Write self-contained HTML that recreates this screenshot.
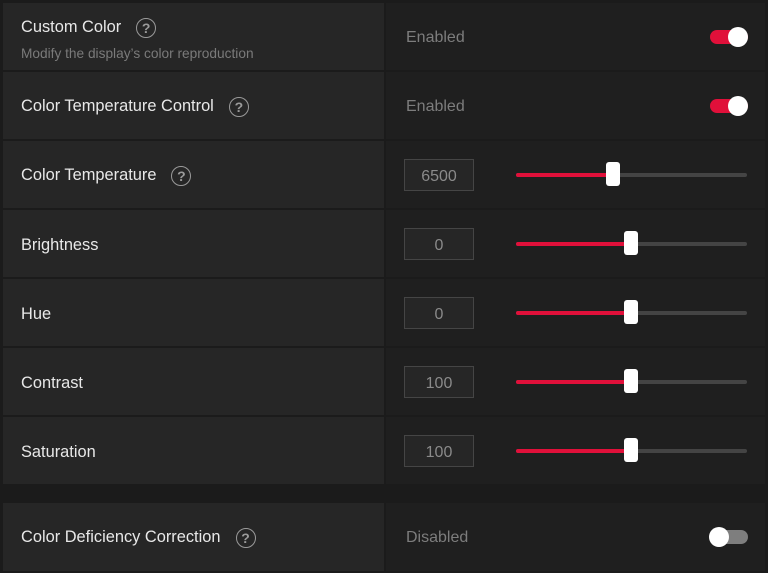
<!DOCTYPE html>
<html><head><style>
body{margin:0;width:768px;height:573px;background:#1b1b1b;font-family:"Liberation Sans",sans-serif;position:relative;overflow:hidden}
.l{position:absolute;left:3px;width:381px;height:67px;background:#262626}
.r{position:absolute;left:386px;width:379px;height:67px;background:#1f1f1f}
.t{position:absolute;left:18px;color:#e8e8e8;font-size:16.4px}
.sub{position:absolute;left:18px;top:43px;color:#7a7a7a;font-size:13.7px}
.q{display:inline-block;width:18px;height:18px;border:1.6px solid #9a9a9a;border-radius:50%;color:#9a9a9a;font-size:14px;font-weight:bold;text-align:center;line-height:18px;margin-left:15px;vertical-align:-1px}
.st{position:absolute;left:20px;color:#7d7d7d;font-size:16px}
.tg{position:absolute;left:324px;width:38px;height:14px;border-radius:7px}
.kn{position:absolute;width:20px;height:20px;border-radius:50%;background:#fff;top:-3px}
.in{position:absolute;left:18px;top:18px;width:68px;height:30px;border:1px solid #454545;background:#262626;color:#8a8a8a;font-size:16px;text-align:center;line-height:34px;box-sizing:content-box}
.tr{position:absolute;left:130px;top:32px;width:231px;height:4px;border-radius:2px;background:#444}
.fl{position:absolute;left:0;top:0;height:4px;border-radius:2px;background:#e0103a}
.th{position:absolute;top:-11px;width:14px;height:24px;border-radius:3px;background:#fff}
</style></head><body>
<div class="l" style="top:3px"><div class="t" style="top:15px">Custom Color<span class="q">?</span></div><div class="sub">Modify the display’s color reproduction</div></div>
<div class="r" style="top:3px"><div class="st" style="top:26px">Enabled</div><div class="tg" style="top:27px;background:#e0103a"><div class="kn" style="left:18px"></div></div></div>

<div class="l" style="top:72px"><div class="t" style="top:25px">Color Temperature Control<span class="q">?</span></div></div>
<div class="r" style="top:72px"><div class="st" style="top:26px">Enabled</div><div class="tg" style="top:27px;background:#e0103a"><div class="kn" style="left:18px"></div></div></div>

<div class="l" style="top:141px"><div class="t" style="top:25px">Color Temperature<span class="q">?</span></div></div>
<div class="r" style="top:141px"><div class="in">6500</div><div class="tr"><div class="fl" style="width:97px"></div><div class="th" style="left:90px"></div></div></div>

<div class="l" style="top:210px"><div class="t" style="top:26px">Brightness</div></div>
<div class="r" style="top:210px"><div class="in">0</div><div class="tr"><div class="fl" style="width:115px"></div><div class="th" style="left:108px"></div></div></div>

<div class="l" style="top:279px"><div class="t" style="top:26px">Hue</div></div>
<div class="r" style="top:279px"><div class="in">0</div><div class="tr"><div class="fl" style="width:115px"></div><div class="th" style="left:108px"></div></div></div>

<div class="l" style="top:348px"><div class="t" style="top:26px">Contrast</div></div>
<div class="r" style="top:348px"><div class="in">100</div><div class="tr"><div class="fl" style="width:115px"></div><div class="th" style="left:108px"></div></div></div>

<div class="l" style="top:417px"><div class="t" style="top:26px">Saturation</div></div>
<div class="r" style="top:417px"><div class="in">100</div><div class="tr"><div class="fl" style="width:115px"></div><div class="th" style="left:108px"></div></div></div>

<div class="l" style="top:503px;height:68px"><div class="t" style="top:25px">Color Deficiency Correction<span class="q">?</span></div></div>
<div class="r" style="top:503px;height:68px"><div class="st" style="top:26px">Disabled</div><div class="tg" style="top:27px;background:#7e7e7e"><div class="kn" style="left:-1px"></div></div></div>
</body></html>
